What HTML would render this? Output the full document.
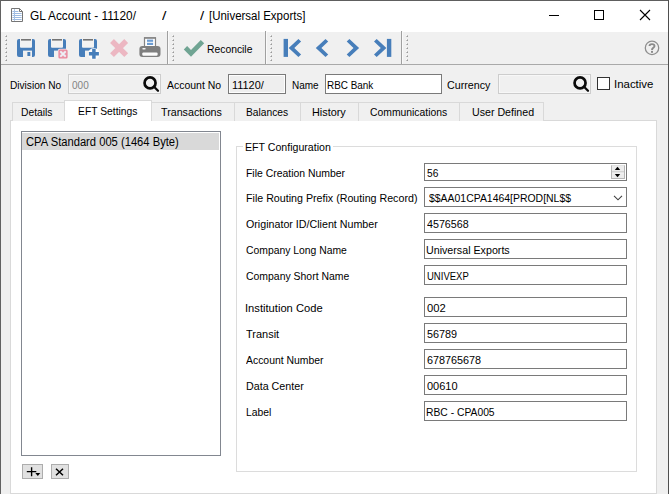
<!DOCTYPE html>
<html lang="en">
<head>
<meta charset="utf-8">
<title>GL Account - 11120/ / / [Universal Exports]</title>
<style>
html,body{margin:0;padding:0;}
body{width:669px;height:494px;overflow:hidden;position:relative;background:#f0f0f0;
 font-family:"Liberation Sans",sans-serif;font-size:12px;color:#000;}
#win{position:absolute;left:0;top:0;width:669px;height:494px;overflow:hidden;background:#f0f0f0;}
#win *{box-sizing:border-box;}
.abs,.t,#win div,#win svg{position:absolute;}
.t{white-space:pre;transform-origin:0 0;font-family:"Liberation Sans",sans-serif;}
/* frame */
#b-top{left:0;top:0;width:669px;height:1px;background:#5e5e5e;}
#b-left{left:0;top:0;width:1px;height:494px;background:#626262;}
#b-right{left:668px;top:0;width:1px;height:494px;background:#4f4f4f;}
#titlebar{left:1px;top:1px;width:667px;height:31px;background:#fff;}
/* toolbar */
#toolbar{left:1px;top:32px;width:667px;height:33px;background:#f0f0f0;border-bottom:1px solid #a9a9a9;}
.sep{top:31px;width:2px;height:33px;border-left:1px solid #a0a0a0;background:#fafafa;}
/* inputs */
.in{background:#fff;border:1px solid #7a7a7a;}
.in.ro{background:#f0f0f0;border-color:#cdcdcd;box-shadow:inset 0 0 0 1px #f7f7f7;}
.in.dis{background:#eeeeee;border-color:#7a7a7a;box-shadow:inset 0 0 0 1px #fdfdfd;}
/* tabs */
.tab{top:102px;height:19px;background:#f0f0f0;border:1px solid #d9d9d9;border-bottom:none;}
.tab.sel{top:100px;height:21px;background:#fff;}
#pane{left:10px;top:120px;width:647px;height:374px;background:#fff;border:1px solid #d9d9d9;}
#list{left:21px;top:131px;width:200px;height:325px;background:#fff;border:1px solid #828790;}
#lsel{left:22px;top:133px;width:197px;height:17px;background:#d9d9d9;}
#group{left:236px;top:146px;width:401px;height:326px;border:1px solid #dcdcdc;}
#legend{left:243px;top:140px;width:90px;height:14px;background:#fff;}
.btn{background:#e1e1e1;border:1px solid #adadad;}

</style>
</head>
<body>
<div id="win">
<div id="titlebar"></div>
<div id="toolbar"></div>
<div id="b-top"></div><div id="b-left"></div><div id="b-right"></div>

<!-- title icon -->
<svg style="left:10px;top:7px" width="14" height="16" viewBox="0 0 14 16">
 <path d="M1.5 1.5H9.5L12.5 4.5V14.5H1.5Z" fill="#fff" stroke="#757575" stroke-width="1"/>
 <path d="M9.5 1.5V4.5H12.5" fill="none" stroke="#757575" stroke-width="1"/>
 <path d="M2.4 4.5H8.4M2.4 6.5H11.6M2.4 8.5H11.6M2.4 10.5H11.6M2.4 12.5H11.6" stroke="#9dbbe2" stroke-width="1"/>
 <path d="M4.5 2.2V13.8" stroke="#a4c0e4" stroke-width="1"/>
</svg>
<!-- window buttons -->
<svg style="left:540px;top:1px" width="128" height="30" viewBox="0 0 128 30">
 <path d="M9 14.5H19" stroke="#000" stroke-width="1"/>
 <rect x="54.5" y="9.5" width="9" height="9" fill="none" stroke="#000" stroke-width="1"/>
 <path d="M100 9L110 19M110 9L100 19" stroke="#000" stroke-width="1.1"/>
</svg>

<!-- toolbar grips & separators -->
<svg style="left:5px;top:35px" width="2" height="27" viewBox="0 0 2 27" shape-rendering="crispEdges"><defs><g id="grip"><path d="M0 0h1v1h-1z" fill="#fafafa"/><path d="M1 0h1v1h-1zM0 1h1v1h-1z" fill="#c2c2c2"/><path d="M1 1h1v1h-1z" fill="#999"/><path d="M0 4h1v1h-1z" fill="#fafafa"/><path d="M1 4h1v1h-1zM0 5h1v1h-1z" fill="#c2c2c2"/><path d="M1 5h1v1h-1z" fill="#999"/><path d="M0 8h1v1h-1z" fill="#fafafa"/><path d="M1 8h1v1h-1zM0 9h1v1h-1z" fill="#c2c2c2"/><path d="M1 9h1v1h-1z" fill="#999"/><path d="M0 12h1v1h-1z" fill="#fafafa"/><path d="M1 12h1v1h-1zM0 13h1v1h-1z" fill="#c2c2c2"/><path d="M1 13h1v1h-1z" fill="#999"/><path d="M0 16h1v1h-1z" fill="#fafafa"/><path d="M1 16h1v1h-1zM0 17h1v1h-1z" fill="#c2c2c2"/><path d="M1 17h1v1h-1z" fill="#999"/><path d="M0 20h1v1h-1z" fill="#fafafa"/><path d="M1 20h1v1h-1zM0 21h1v1h-1z" fill="#c2c2c2"/><path d="M1 21h1v1h-1z" fill="#999"/><path d="M0 24h1v1h-1z" fill="#fafafa"/><path d="M1 24h1v1h-1zM0 25h1v1h-1z" fill="#c2c2c2"/><path d="M1 25h1v1h-1z" fill="#999"/></g></defs><use href="#grip"/></svg>
<div class="sep" style="left:167px"></div>
<svg style="left:172px;top:35px" width="2" height="27" viewBox="0 0 2 27" shape-rendering="crispEdges"><use href="#grip"/></svg>
<div class="sep" style="left:265px"></div>
<svg style="left:270px;top:35px" width="2" height="27" viewBox="0 0 2 27" shape-rendering="crispEdges"><use href="#grip"/></svg>
<div class="sep" style="left:401px"></div>
<svg style="left:406px;top:35px" width="2" height="27" viewBox="0 0 2 27" shape-rendering="crispEdges"><use href="#grip"/></svg>

<!-- toolbar icons -->
<svg style="left:16px;top:36px" width="150" height="24" viewBox="16 36 150 24">
 <defs>
  <g id="floppy">
   <rect x="0" y="0" width="18" height="18" rx="2" fill="#477eba"/>
   <path d="M3 -0.5H15V7.8A1 1 0 0 1 14 8.8H4A1 1 0 0 1 3 7.8Z" fill="#f2f2f2"/>
   <rect x="4" y="0" width="10" height="1.6" fill="#747474"/>
   <rect x="6" y="11.6" width="9" height="7.4" fill="#f0f0f0"/>
   <rect x="10.4" y="13" width="2.9" height="4" fill="#477eba"/>
  </g>
 </defs>
 <use href="#floppy" x="17" y="39"/>
 <use href="#floppy" x="48" y="39"/>
 <rect x="57.8" y="48.8" width="10.4" height="10.4" rx="2" fill="#f6eef0"/>
 <rect x="58.4" y="49.4" width="9.2" height="9.2" rx="1.5" fill="#e8889d"/>
 <rect x="59.6" y="50.6" width="6.8" height="6.8" rx="0.8" fill="#eb9cae"/>
 <path d="M60.3 51.3L65.7 56.7M65.7 51.3L60.3 56.7" stroke="#edf1f7" stroke-width="1.9"/>
 <use href="#floppy" x="79" y="39"/>
 <circle cx="93.9" cy="53.8" r="5.9" fill="#fbfbfb"/>
 <path d="M88.9 53.75H98.9M93.9 48.8V58.7" stroke="#477eba" stroke-width="3.5"/>
 <!-- delete X -->
 <path d="M112 41L126.2 55.2M126.2 41L112 55.2" stroke="#ecb7c2" stroke-width="5.4"/>
 <!-- printer -->
 <rect x="144.5" y="37.9" width="11" height="10" fill="#fdfdfd" stroke="#848484" stroke-width="1.2"/>
 <rect x="144" y="37.2" width="12" height="1.4" fill="#848484"/>
 <rect x="147" y="39.6" width="6.1" height="2.2" fill="#6c9cd2"/>
 <rect x="147" y="42.8" width="6.1" height="2.2" fill="#6c9cd2"/>
 <rect x="139.4" y="46.1" width="21.1" height="10.8" rx="3" fill="#7f7f7f"/>
 <rect x="142.3" y="52.4" width="15.3" height="3.3" rx="1.2" fill="#fcfcfc"/>
 <rect x="142.3" y="47.9" width="3.4" height="1.6" rx="0.8" fill="#f2f2f2"/>
</svg>
<!-- reconcile check -->
<svg style="left:182px;top:38px" width="24" height="20" viewBox="182 38 24 20">
 <path d="M183.8 49.4L187.1 46L191 49.9L200.8 40L204.2 43.2L191 56.8Z" fill="#70a493"/>
</svg>
<!-- nav arrows -->
<svg style="left:280px;top:36px" width="116" height="24" viewBox="280 36 116 24">
 <g fill="#477eba">
  <rect x="283.6" y="38.9" width="4.4" height="18"/>
  <path d="M301.1 41.6L298.4 38.9L288.7 48L298.4 57.1L301.1 54.4L294.3 48Z"/>
  <path d="M328.2 41.6L325.5 38.9L315.8 48L325.5 57.1L328.2 54.4L321.4 48Z"/>
  <path d="M346.7 41.6L349.4 38.9L359.1 48L349.4 57.1L346.7 54.4L353.5 48Z"/>
  <path d="M374.0 41.6L376.7 38.9L386.4 48L376.7 57.1L374.0 54.4L380.8 48Z"/>
  <rect x="386.9" y="38.9" width="4.4" height="18"/>
 </g>
</svg>
<!-- help -->
<svg style="left:643px;top:39px" width="18" height="18" viewBox="0 0 18 18">
 <circle cx="9" cy="8.9" r="6.7" fill="none" stroke="#8e8e8e" stroke-width="1.3"/>
 <path d="M6.5 7.1C6.5 4.4 11.5 4.4 11.5 7.1C11.5 8.9 9 8.8 9 10.9" fill="none" stroke="#8a8a8a" stroke-width="1.9"/>
 <rect x="8" y="11.9" width="2" height="1.9" fill="#8a8a8a"/>
</svg>

<!-- header row inputs -->
<div class="in ro" style="left:68px;top:74px;width:93px;height:20px"></div>
<div class="in dis" style="left:228px;top:74px;width:58px;height:20px"></div>
<div class="in" style="left:325px;top:74px;width:117px;height:20px"></div>
<div class="in ro" style="left:498px;top:74px;width:93px;height:20px"></div>
<svg style="left:142px;top:76px" width="18" height="16" viewBox="0 0 18 16"><use href="#mag"/></svg>
<svg style="left:572px;top:76px" width="18" height="16" viewBox="0 0 18 16">
 <defs><g id="mag"><circle cx="8.05" cy="6.9" r="5.5" fill="none" stroke="#0a0a0a" stroke-width="2.7"/><path d="M12 10.8L16 14.8" stroke="#0a0a0a" stroke-width="2.2" stroke-linecap="round"/></g></defs>
 <use href="#mag"/>
</svg>
<div style="left:597px;top:77px;width:13px;height:13px;background:#fff;border:1px solid #333"></div>

<!-- tabs -->
<div id="pane"></div>
<div class="tab" style="left:12px;width:53px"></div>
<div class="tab" style="left:150px;width:85px"></div>
<div class="tab" style="left:234px;width:67px"></div>
<div class="tab" style="left:300px;width:59px"></div>
<div class="tab" style="left:358px;width:102px"></div>
<div class="tab" style="left:459px;width:85px"></div>
<div class="tab sel" style="left:64px;width:88px"></div>

<!-- list -->
<div id="list"></div>
<div id="lsel"></div>
<div class="btn" style="left:22px;top:464px;width:21px;height:15px"></div>
<div class="btn" style="left:51px;top:464px;width:18px;height:15px"></div>
<svg style="left:22px;top:464px" width="48" height="15" viewBox="0 0 48 15">
 <path d="M4.8 7.6H14.3M9.6 3.2V12.3" stroke="#000" stroke-width="1.35"/>
 <path d="M13.3 9H18.3L15.8 11.9Z" fill="#000"/>
 <path d="M34 4.7L41 11.3M41 4.7L34 11.3" stroke="#000" stroke-width="1.5"/>
</svg>

<!-- group box -->
<div id="group"></div>
<div id="legend"></div>

<!-- form inputs -->
<div class="in" style="left:424px;top:163px;width:203px;height:18px"></div>
<div class="in" style="left:424px;top:187px;width:203px;height:20px"></div>
<div class="in" style="left:424px;top:213px;width:203px;height:20px"></div>
<div class="in" style="left:424px;top:239px;width:203px;height:20px"></div>
<div class="in" style="left:424px;top:265px;width:203px;height:20px"></div>
<div class="in" style="left:424px;top:297px;width:203px;height:20px"></div>
<div class="in" style="left:424px;top:323px;width:203px;height:20px"></div>
<div class="in" style="left:424px;top:349px;width:203px;height:20px"></div>
<div class="in" style="left:424px;top:375px;width:203px;height:20px"></div>
<div class="in" style="left:424px;top:401px;width:203px;height:20px"></div>
<!-- spinner -->
<div style="left:611px;top:165px;width:14px;height:14px;background:#ececec;border:1px solid #b6b6b6;border-top-color:#e2e2e2"></div>
<svg style="left:611px;top:165px" width="14" height="14" viewBox="0 0 14 14">
 <path d="M1 7H13" stroke="#bdbdbd" stroke-width="1"/>
 <path d="M1 8H13" stroke="#f6f6f6" stroke-width="1"/>
 <path d="M3.8 5H9.2L6.5 1.8Z" fill="#000"/>
 <path d="M3.8 9.1H9.2L6.5 12.2Z" fill="#000"/>
</svg>
<!-- combo chevron -->
<svg style="left:612px;top:193px" width="12" height="9" viewBox="0 0 12 9">
 <path d="M2 2.8L6 6.8L10 2.8" fill="none" stroke="#404040" stroke-width="1.1"/>
</svg>

<span class="t" style="left:30.30px;top:7.84px;font-size:12px;line-height:16px;transform:scaleX(0.9885);">GL Account - 11120/</span>
<span class="t" style="left:161.80px;top:7.84px;font-size:12px;line-height:16px;transform:scaleX(1.3250);">/</span>
<span class="t" style="left:200.30px;top:7.84px;font-size:12px;line-height:16px;transform:scaleX(1.2500);">/</span>
<span class="t" style="left:209.00px;top:7.84px;font-size:12px;line-height:16px;transform:scaleX(0.9565);">[Universal Exports]</span>
<span class="t" style="left:207.00px;top:41.69px;font-size:11px;line-height:15px;transform:scaleX(0.9401);">Reconcile</span>
<span class="t" style="left:9.50px;top:77.69px;font-size:11px;line-height:15px;transform:scaleX(0.9205);">Division No</span>
<span class="t" style="left:71.70px;top:77.69px;font-size:11px;line-height:15px;transform:scaleX(0.9103);color:#838383;">000</span>
<span class="t" style="left:167.10px;top:77.69px;font-size:11px;line-height:15px;transform:scaleX(0.9516);">Account No</span>
<span class="t" style="left:232.00px;top:77.69px;font-size:11px;line-height:15px;transform:scaleX(0.9922);">11120/</span>
<span class="t" style="left:291.50px;top:77.69px;font-size:11px;line-height:15px;transform:scaleX(0.9068);">Name</span>
<span class="t" style="left:326.80px;top:77.69px;font-size:11px;line-height:15px;transform:scaleX(0.9006);">RBC Bank</span>
<span class="t" style="left:447.30px;top:77.69px;font-size:11px;line-height:15px;transform:scaleX(0.9729);">Currency</span>
<span class="t" style="left:613.76px;top:76.69px;font-size:11px;line-height:15px;transform:scaleX(1.0383);">Inactive</span>
<span class="t" style="left:21.40px;top:104.69px;font-size:11px;line-height:15px;transform:scaleX(0.9349);">Details</span>
<span class="t" style="left:77.50px;top:103.69px;font-size:11px;line-height:15px;transform:scaleX(0.9379);">EFT Settings</span>
<span class="t" style="left:161.00px;top:104.69px;font-size:11px;line-height:15px;transform:scaleX(0.9736);">Transactions</span>
<span class="t" style="left:246.40px;top:104.69px;font-size:11px;line-height:15px;transform:scaleX(0.9311);">Balances</span>
<span class="t" style="left:312.10px;top:104.69px;font-size:11px;line-height:15px;transform:scaleX(0.9878);">History</span>
<span class="t" style="left:370.00px;top:104.69px;font-size:11px;line-height:15px;transform:scaleX(0.9427);">Communications</span>
<span class="t" style="left:471.60px;top:104.69px;font-size:11px;line-height:15px;transform:scaleX(0.9676);">User Defined</span>
<span class="t" style="left:26.40px;top:133.84px;font-size:12px;line-height:16px;transform:scaleX(0.9323);">CPA Standard 005 (1464 Byte)</span>
<span class="t" style="left:244.60px;top:139.69px;font-size:11px;line-height:15px;transform:scaleX(0.9636);">EFT Configuration</span>
<span class="t" style="left:245.60px;top:165.69px;font-size:11px;line-height:15px;transform:scaleX(0.9478);">File Creation Number</span>
<span class="t" style="left:245.60px;top:190.69px;font-size:11px;line-height:15px;transform:scaleX(0.9703);">File Routing Prefix (Routing Record)</span>
<span class="t" style="left:245.60px;top:216.69px;font-size:11px;line-height:15px;transform:scaleX(0.9710);">Originator ID/Client Number</span>
<span class="t" style="left:245.60px;top:242.69px;font-size:11px;line-height:15px;transform:scaleX(0.9421);">Company Long Name</span>
<span class="t" style="left:245.60px;top:268.69px;font-size:11px;line-height:15px;transform:scaleX(0.9493);">Company Short Name</span>
<span class="t" style="left:244.58px;top:300.69px;font-size:11px;line-height:15px;transform:scaleX(1.0157);">Institution Code</span>
<span class="t" style="left:245.60px;top:326.69px;font-size:11px;line-height:15px;transform:scaleX(0.9984);">Transit</span>
<span class="t" style="left:245.60px;top:352.69px;font-size:11px;line-height:15px;transform:scaleX(0.9470);">Account Number</span>
<span class="t" style="left:245.60px;top:378.69px;font-size:11px;line-height:15px;transform:scaleX(0.9741);">Data Center</span>
<span class="t" style="left:245.60px;top:404.69px;font-size:11px;line-height:15px;transform:scaleX(0.9407);">Label</span>
<span class="t" style="left:427.20px;top:165.69px;font-size:11px;line-height:15px;transform:scaleX(0.9243);">56</span>
<span class="t" style="left:428.90px;top:190.69px;font-size:11px;line-height:15px;transform:scaleX(0.9492);">$$AA01CPA1464[PROD[NL$$</span>
<span class="t" style="left:427.10px;top:216.69px;font-size:11px;line-height:15px;transform:scaleX(0.9718);">4576568</span>
<span class="t" style="left:426.30px;top:242.69px;font-size:11px;line-height:15px;transform:scaleX(0.9712);">Universal Exports</span>
<span class="t" style="left:426.80px;top:268.69px;font-size:11px;line-height:15px;transform:scaleX(0.8654);">UNIVEXP</span>
<span class="t" style="left:426.50px;top:300.69px;font-size:11px;line-height:15px;transform:scaleX(1.0200);">002</span>
<span class="t" style="left:427.00px;top:326.69px;font-size:11px;line-height:15px;transform:scaleX(0.9846);">56789</span>
<span class="t" style="left:427.00px;top:352.69px;font-size:11px;line-height:15px;transform:scaleX(0.9829);">678765678</span>
<span class="t" style="left:426.50px;top:378.69px;font-size:11px;line-height:15px;transform:scaleX(1.0010);">00610</span>
<span class="t" style="left:426.20px;top:404.69px;font-size:11px;line-height:15px;transform:scaleX(0.9379);">RBC - CPA005</span>
</div>

</body>
</html>
